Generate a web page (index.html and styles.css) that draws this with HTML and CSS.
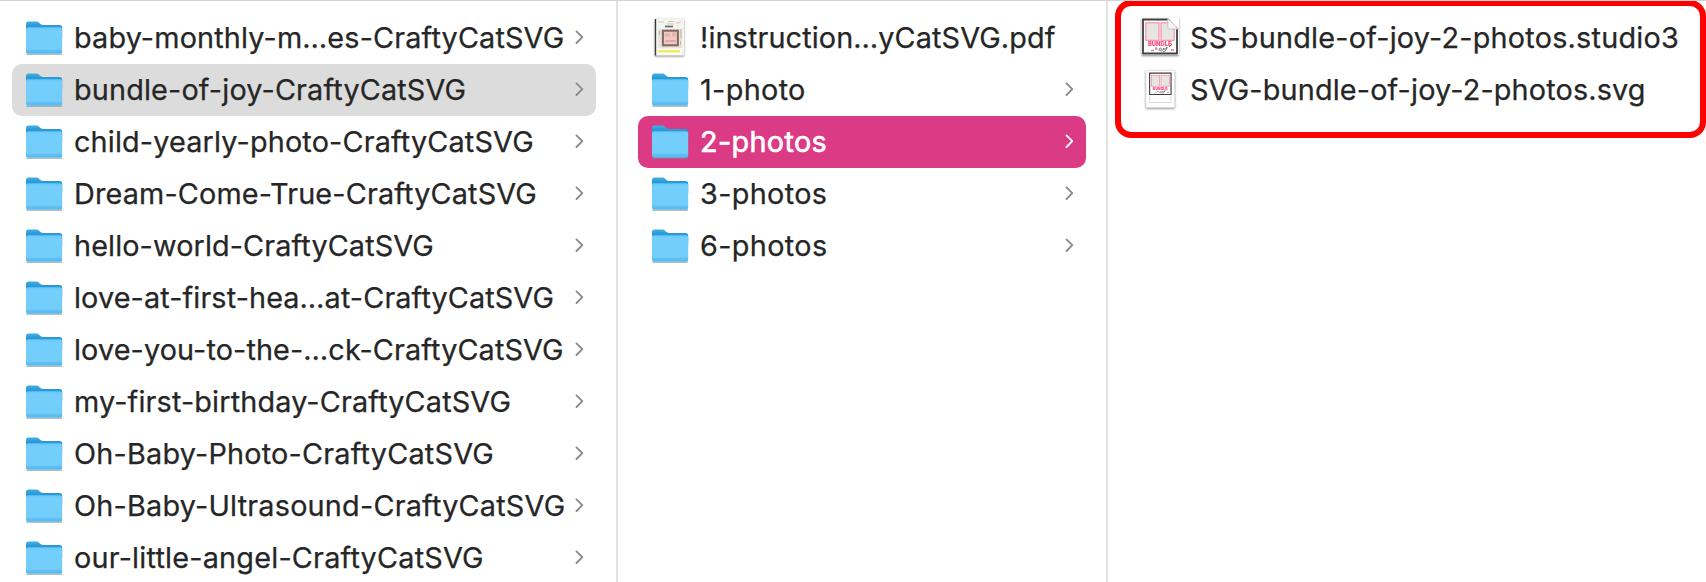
FILE: index.html
```html
<!DOCTYPE html>
<html lang="en">
<head>
<meta charset="utf-8">
<title>Files</title>
<link rel="stylesheet" href="styles.css">
</head>
<body>
<svg class="defs" width="0" height="0" aria-hidden="true">
  <defs>
    <linearGradient id="tab" x1="0" y1="0" x2="0" y2="1"><stop offset="0" stop-color="#45aee2"/><stop offset=".4" stop-color="#1f93d4"/></linearGradient>
    <linearGradient id="front" x1="0" y1="0" x2="0" y2="1"><stop offset="0" stop-color="#67c7f8"/><stop offset=".12" stop-color="#74cffc"/><stop offset=".82" stop-color="#72cdfb"/><stop offset=".88" stop-color="#5fc0f1"/><stop offset="1" stop-color="#58b9ea"/></linearGradient>
    <symbol id="folder" viewBox="0 0 40 52">
      <path d="M3 42.2h34.5" stroke="#7d8b94" stroke-opacity=".55" stroke-width="1.6" stroke-linecap="round"/>
      <path d="M2 12a2.6 2.6 0 0 1 2.6-2.6h7.2c1.6 0 2.300.4 3.500 1.500 1.300 1.300 2.200 2 4 2h16.100A2.800 2.800 0 0 1 38.200 15.700V25H2z" fill="url(#tab)"/>
      <path d="M2 17.200a2 2 0 0 1 2-2h32.200a2 2 0 0 1 2 2v22a2.600 2.600 0 0 1-2.600 2.600h-31a2.600 2.600 0 0 1-2.600-2.600z" fill="url(#front)"/>
    </symbol>
    <symbol id="chev" viewBox="0 0 10 16"><path d="M2.500 2.400 8.300 8.200l-5.800 5.800" fill="none" stroke="currentColor" stroke-width="1.900" stroke-linecap="round" stroke-linejoin="round"/></symbol>
    <g id="poster">
      <rect width="36" height="36" fill="#fff"/>
      <path d="M1 1h34v34H1z" fill="#fff" stroke="#3f3f41" stroke-width="1.800"/>
      <rect x="3.800" y="4.300" width="13.200" height="17.500" fill="#e6e5e2" stroke="#ff7d9f" stroke-width="1"/>
      <rect x="19" y="4.300" width="13.200" height="17.500" fill="#e6e5e2" stroke="#ff7d9f" stroke-width="1"/>
      <text x="6" y="27.600" class="bundle" textLength="23.500" lengthAdjust="spacingAndGlyphs">BUNDLE</text>
      <path d="M9 32.500q2-2 3 0m1-3h2m2 3c0-4 3-4 2-1s2 0 3-2c-1 4 2 1 3-1 0 3-3 6-4 4m6-4 3-3" fill="none" stroke="#59595b" stroke-width=".8"/>
      <path d="M13 30.500h2.500M29 31.500h3" stroke="#ff6f95" stroke-width="1.500"/>
    </g>
  </defs>
</svg>
<main class="browser">
  <section class="column col-a">
    <div class="row"><svg class="icon"><use href="#folder"/></svg><span class="name">baby-monthly-m…es-CraftyCatSVG</span><svg class="chev"><use href="#chev"/></svg></div>
    <div class="row open"><svg class="icon"><use href="#folder"/></svg><span class="name">bundle-of-joy-CraftyCatSVG</span><svg class="chev"><use href="#chev"/></svg></div>
    <div class="row"><svg class="icon"><use href="#folder"/></svg><span class="name">child-yearly-photo-CraftyCatSVG</span><svg class="chev"><use href="#chev"/></svg></div>
    <div class="row"><svg class="icon"><use href="#folder"/></svg><span class="name">Dream-Come-True-CraftyCatSVG</span><svg class="chev"><use href="#chev"/></svg></div>
    <div class="row"><svg class="icon"><use href="#folder"/></svg><span class="name tight">hello-world-CraftyCatSVG</span><svg class="chev"><use href="#chev"/></svg></div>
    <div class="row"><svg class="icon"><use href="#folder"/></svg><span class="name tight">love-at-first-hea…at-CraftyCatSVG</span><svg class="chev"><use href="#chev"/></svg></div>
    <div class="row"><svg class="icon"><use href="#folder"/></svg><span class="name tight">love-you-to-the-…ck-CraftyCatSVG</span><svg class="chev"><use href="#chev"/></svg></div>
    <div class="row"><svg class="icon"><use href="#folder"/></svg><span class="name">my-first-birthday-CraftyCatSVG</span><svg class="chev"><use href="#chev"/></svg></div>
    <div class="row"><svg class="icon"><use href="#folder"/></svg><span class="name loose">Oh-Baby-Photo-CraftyCatSVG</span><svg class="chev"><use href="#chev"/></svg></div>
    <div class="row"><svg class="icon"><use href="#folder"/></svg><span class="name loose">Oh-Baby-Ultrasound-CraftyCatSVG</span><svg class="chev"><use href="#chev"/></svg></div>
    <div class="row"><svg class="icon"><use href="#folder"/></svg><span class="name loose">our-little-angel-CraftyCatSVG</span><svg class="chev"><use href="#chev"/></svg></div>
  </section>
  <section class="column col-b">
    <div class="row">
      <svg class="icon shadow" viewBox="0 0 40 52">
        <rect x="5" y="6.500" width="29" height="37" fill="#f4f4f3"/>
        <path d="M5.500 7v36.500" stroke="#3b3b3b" stroke-width="1.300"/>
        <path d="M8 10h6M17 12h7" stroke="#d6d6d6" stroke-width="1.500"/>
        <path d="M18 9.500h6" stroke="#d8cf8a" stroke-width="1"/>
        <path d="M15 14.500h8" stroke="#66666a" stroke-width="1.600"/>
        <path d="m26 10 2 1.500 3-2m-3 3v1.500" stroke="#f4a3b3" stroke-width=".8" fill="none"/>
        <rect x="8" y="17" width="24" height="19.500" fill="#e4e3e0"/>
        <path d="M9.500 19v4m21.500-6v9" stroke="#c4b8a4" stroke-width="1.200"/>
        <path d="M30.500 29v4" stroke="#c8c070"/>
        <rect x="12.900" y="18.700" width="15" height="14.600" fill="#ecc9c3" stroke="#84685c" stroke-width="2"/>
        <path d="M15 21.500h5v3h-5zm7-1h4v4h-4z" fill="#e0b5ab"/>
        <path d="M15.500 29h10" stroke="#eb9dab" stroke-width="1.800"/>
        <rect x="8" y="36.500" width="24" height="6" fill="#fcfcf4"/>
        <path d="M8.500 39.300H30" stroke="#f3e84e" stroke-width="2.200"/>
      </svg>
      <span class="name tight">!instruction…yCatSVG.pdf</span>
    </div>
    <div class="row"><svg class="icon"><use href="#folder"/></svg><span class="name wide">1-photo</span><svg class="chev"><use href="#chev"/></svg></div>
    <div class="row active"><svg class="icon"><use href="#folder"/></svg><span class="name wide">2-photos</span><svg class="chev"><use href="#chev"/></svg></div>
    <div class="row"><svg class="icon"><use href="#folder"/></svg><span class="name wide">3-photos</span><svg class="chev"><use href="#chev"/></svg></div>
    <div class="row"><svg class="icon"><use href="#folder"/></svg><span class="name wide">6-photos</span><svg class="chev"><use href="#chev"/></svg></div>
  </section>
  <section class="column col-c">
    <div class="row">
      <svg class="icon shadow" viewBox="0 0 40 52">
        <path d="M1.500 6h26L39 17.500V43H1.500z" fill="#fff"/>
        <use href="#poster" transform="translate(2 6.500)"/>
        <path d="M27.500 5.500h11.500v12z" fill="#fff"/>
        <path d="M27.800 6.500v9a1.500 1.500 0 0 0 1.500 1.500h9z" fill="#f4f4f4" stroke="#bdbdbd" stroke-width=".8"/>
      </svg>
      <span class="name loose">SS-bundle-of-joy-2-photos.studio3</span>
    </div>
    <div class="row">
      <svg class="icon shadow" viewBox="0 0 40 52">
        <rect x="6" y="6.500" width="28.500" height="37" fill="#fff" stroke="#e2e2e2" stroke-width=".6"/>
        <use href="#poster" transform="translate(9 8.500) scale(.63)"/>
        <path d="M9.500 32v6.500h21.500V32" fill="none" stroke="#d0d0d0" stroke-width=".8"/>
      </svg>
      <span class="name">SVG-bundle-of-joy-2-photos.svg</span>
    </div>
  </section>
  <div class="highlight"></div>
</main>
</body>
</html>
```
FILE: styles.css
```css
* { box-sizing: border-box; }
body { margin: 0; background: #fff; overflow: hidden; }
.defs { position: absolute; }
.browser {
  position: relative;
  display: grid;
  grid-template-columns: 618px 490px 1fr;
  height: 582px;
  overflow: hidden;
  border-top: 1px solid #d4d4d4;
  font-family: Inter, "Liberation Sans", sans-serif;
  font-size: 28.8px;
  color: #262626;
}
.column { padding: 11px 20px 0 12px; border-right: 2px solid #e2e2e2; }
.col-b { padding-left: 20px; }
.col-c { padding-left: 20px; padding-right: 0; border-right: 0; }
.row {
  display: flex;
  align-items: center;
  height: 52px;
  padding: 0 12px;
  border-radius: 10px;
}
.icon { flex: none; width: 40px; height: 52px; }
.shadow { filter: drop-shadow(0 1px 1px rgba(0, 0, 0, .45)); }
.name {
  flex: 1;
  margin: -2px 0 0 10px;
  line-height: 51px;
  white-space: nowrap;
  letter-spacing: .16px;
  -webkit-text-stroke: .25px currentColor;
}
.tight { letter-spacing: .115px; }
.loose { letter-spacing: .215px; }
.wide { letter-spacing: .35px; }
.chev { flex: none; width: 10px; height: 16px; color: #8b8b8b; margin-top: -2px; }
.open { background: #dcdcdc; }
.active { background: #da3b84; color: #fff; }
.active .name { -webkit-text-stroke-width: .6px; }
.active .chev { color: #fff; }
.bundle { font: 900 6.200px Inter, sans-serif; fill: #ff4f80; }
.highlight {
  position: absolute;
  top: -1px;
  right: 0;
  width: 591px;
  height: 138px;
  border: 6px solid #f00;
  border-radius: 16px;
}
```
